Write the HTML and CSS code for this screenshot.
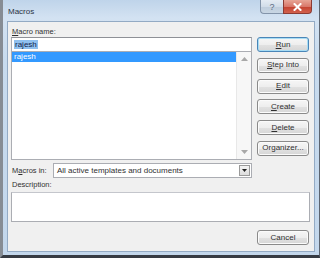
FILE: index.html
```html
<!DOCTYPE html>
<html lang="en">
<head>
    <meta charset="UTF-8">
    <meta name="viewport" content="width=device-width, initial-scale=1.0">
    <title>Macros</title>
    <link rel="stylesheet" href="styles.css">
</head>
<body>

    <!-- Macros dialog window -->
    <div class="window">
        <div class="titlebar">
            <span class="title">Macros</span>
            <div class="controls">
                <span class="ctl help">?</span>
                <span class="ctl close">
                    <svg width="9" height="8" viewBox="0 0 9 8">
                        <path d="M1.5 1 L7.5 7 M7.5 1 L1.5 7" stroke="#ffffff" stroke-width="2" stroke-linecap="square"/>
                    </svg>
                </span>
            </div>
        </div>

        <div class="client">
            <div class="top">
                <div class="left">
                    <div class="label"><u>M</u>acro name:</div>
                    <div class="name-input"><span class="sel">rajesh</span></div>
                    <div class="listbox">
                        <div class="items">
                            <div class="item active">rajesh</div>
                        </div>
                        <div class="scrollbar">
                            <svg width="7" height="4" viewBox="0 0 7 4"><path d="M0 4 L3.5 0 L7 4 Z" fill="#a8a8a8"/></svg>
                            <svg width="7" height="4" viewBox="0 0 7 4"><path d="M0 0 L3.5 4 L7 0 Z" fill="#a8a8a8"/></svg>
                        </div>
                    </div>
                    <div class="macros-in">
                        <span class="label row-label">M<u>a</u>cros in:</span>
                        <div class="combo">
                            <span class="combo-text">All active templates and documents</span>
                            <span class="drop">
                                <svg width="5" height="3" viewBox="0 0 5 3"><path d="M0 0 L5 0 L2.5 3 Z" fill="#202020"/></svg>
                            </span>
                        </div>
                    </div>
                </div>

                <div class="buttons">
                    <button class="btn default"><u>R</u>un</button>
                    <button class="btn"><u>S</u>tep Into</button>
                    <button class="btn"><u>E</u>dit</button>
                    <button class="btn"><u>C</u>reate</button>
                    <button class="btn"><u>D</u>elete</button>
                    <button class="btn">Organizer...</button>
                </div>
            </div>

            <div class="label desc-label">Description:</div>
            <div class="description"></div>

            <div class="footer">
                <button class="btn">Cancel</button>
            </div>
        </div>
    </div>

</body>
</html>
```

FILE: styles.css
```css
body {
    margin: 0;
    padding: 0;
    background-color: #3a3f47;
    font-family: "Liberation Sans", Arial, sans-serif;
}

.window {
    box-sizing: border-box;
    width: 320px;
    height: 258px;
    display: flex;
    flex-direction: column;
    padding: 0 4px 3px 4px;
    border-left: 3px solid #868c94;
    border-right: 1px solid #5c6470;
    border-bottom: 3px solid #363b43;
    background: linear-gradient(#bfd4ea, #d3e2f2 18px, #c8dbee 60px, #c3d7ec);
}

/* Title bar */
.titlebar {
    height: 21px;
    display: flex;
    justify-content: space-between;
    align-items: flex-start;
    flex-shrink: 0;
}

.title {
    padding: 1px 0 0 1px;
    line-height: 21px;
    font-size: 8px;
    color: #2a3444;
}

.controls {
    display: flex;
    margin-right: 3px;
}

.ctl {
    box-sizing: border-box;
    height: 14px;
    display: flex;
    align-items: center;
    justify-content: center;
}

.help {
    width: 23px;
    border: 1px solid #8394aa;
    border-top: none;
    border-right: none;
    border-bottom-left-radius: 4px;
    background: linear-gradient(#e4ebf3, #d2dde9 50%, #bfcddc 51%, #c8d6e4);
    font-size: 9px;
    color: #5c6c84;
}

.close {
    width: 29px;
    border: 1px solid #8c3b33;
    border-top: none;
    border-bottom-right-radius: 4px;
    background: linear-gradient(#e7a596, #d9786a 50%, #c4412f 51%, #d2624e);
}

/* Client area */
.client {
    flex: 1;
    display: flex;
    flex-direction: column;
    padding: 5px 5px 6px 3px;
    border: 1px solid #93aac4;
    background-color: #f0f0f0;
}

.label {
    height: 10px;
    line-height: 10px;
    font-size: 7.5px;
    color: #303030;
    padding-left: 1px;
}

.top {
    display: flex;
    gap: 5px;
}

.left {
    width: 241px;
    display: flex;
    flex-direction: column;
}

.name-input {
    box-sizing: border-box;
    height: 15px;
    display: flex;
    align-items: center;
    padding-left: 2px;
    background-color: white;
    border: 1px solid #abadb3;
    border-top-color: #8e9096;
}

.sel {
    height: 9px;
    line-height: 9px;
    padding: 0 1px;
    font-size: 8px;
    background-color: #8fc0ef;
    color: #14234a;
}

.listbox {
    box-sizing: border-box;
    height: 109px;
    margin-top: -1px;
    display: flex;
    background-color: white;
    border: 1px solid #abadb3;
}

.items {
    flex: 1;
}

.item {
    height: 10px;
    line-height: 10px;
    padding-left: 2px;
    font-size: 8px;
}

.item.active {
    background-color: #3399ff;
    color: white;
}

.scrollbar {
    width: 14px;
    display: flex;
    flex-direction: column;
    justify-content: space-between;
    align-items: center;
    padding: 5px 0 5px 0;
    background-color: #f7f7f7;
    border-left: 1px solid #e8e8e8;
}

.macros-in {
    display: flex;
    align-items: center;
    margin-top: 3px;
}

.row-label {
    width: 41px;
}

.combo {
    box-sizing: border-box;
    flex: 1;
    height: 15px;
    display: flex;
    align-items: center;
    justify-content: space-between;
    padding: 0 1px 0 3px;
    background-color: white;
    border: 1px solid #abadb3;
}

.combo-text {
    font-size: 8px;
    color: #303030;
}

.drop {
    box-sizing: border-box;
    width: 11px;
    height: 11px;
    display: flex;
    align-items: center;
    justify-content: center;
    border: 1px solid #9a9a9a;
    background: linear-gradient(#f4f4f4, #dcdcdc);
}

/* Buttons */
.buttons {
    width: 52px;
    margin-top: 10px;
    display: flex;
    flex-direction: column;
    gap: 5.8px;
}

.btn {
    box-sizing: border-box;
    height: 15px;
    width: 52px;
    padding: 0;
    border: 1px solid #8a8a8a;
    border-radius: 3px;
    background: linear-gradient(#f6f6f6, #eeeeee 50%, #e2e2e2 51%, #d6d6d6);
    box-shadow: inset 0 0 0 1px #fbfbfb;
    font-family: "Liberation Sans", Arial, sans-serif;
    font-size: 8px;
    color: #303030;
    line-height: 12px;
}

.btn.default {
    border-color: #4a86b8;
    box-shadow: inset 0 0 0 1px #a8dcf4;
}

.desc-label {
    margin-top: 2px;
}

.description {
    box-sizing: border-box;
    width: 299px;
    height: 30px;
    margin-top: 2px;
    background-color: white;
    border: 1px solid #abadb3;
    border-top-color: #c4c6cc;
}

.footer {
    display: flex;
    justify-content: flex-end;
    margin-top: 8px;
}
```
